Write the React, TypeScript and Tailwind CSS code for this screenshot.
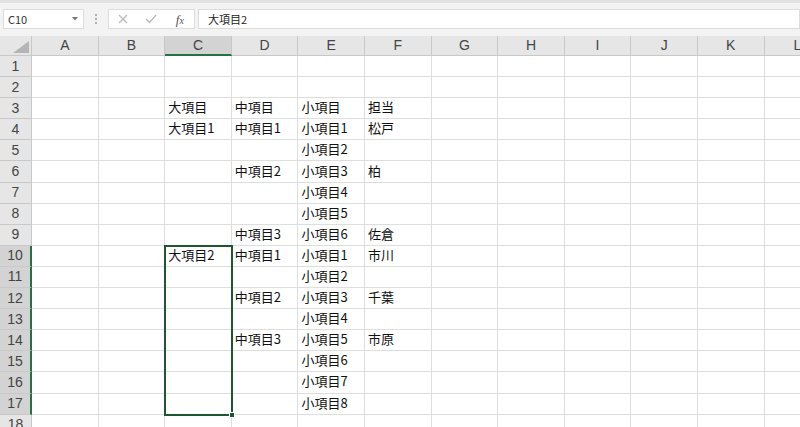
import React from "react";

const cols = ["A", "B", "C", "D", "E", "F", "G", "H", "I", "J", "K", "L"];

const data: Record<number, Record<string, string>> = {
  3: { C: "大項目", D: "中項目", E: "小項目", F: "担当" },
  4: { C: "大項目1", D: "中項目1", E: "小項目1", F: "松戸" },
  5: { E: "小項目2" },
  6: { D: "中項目2", E: "小項目3", F: "柏" },
  7: { E: "小項目4" },
  8: { E: "小項目5" },
  9: { D: "中項目3", E: "小項目6", F: "佐倉" },
  10: { C: "大項目2", D: "中項目1", E: "小項目1", F: "市川" },
  11: { E: "小項目2" },
  12: { D: "中項目2", E: "小項目3", F: "千葉" },
  13: { E: "小項目4" },
  14: { D: "中項目3", E: "小項目5", F: "市原" },
  15: { E: "小項目6" },
  16: { E: "小項目7" },
  17: { E: "小項目8" },
};

const rows = Array.from({ length: 18 }, (_, i) => i + 1);

export default function App() {
  return (
    <div className="w-[800px] h-[427px] overflow-hidden bg-white relative font-['Noto_Sans_CJK_JP','Noto_Sans',sans-serif]">
      {/* Formula bar area */}
      <div className="h-[36px] bg-[#f3f3f3] border-t-[3px] border-[#e2e2e2] flex items-start pt-[6px] pl-[3px]">
        <div className="w-[81px] h-[20px] bg-white border border-[#dcdcdc] flex items-center justify-between pl-[4px] pr-[4px]">
          <span className="text-[11px] text-[#333] leading-none">C10</span>
          <svg width="6" height="4" viewBox="0 0 6 4" className="mr-[1px]">
            <path d="M0 0 L6 0 L3 3.5 Z" fill="#777" />
          </svg>
        </div>
        <div className="w-[24px] h-[20px] flex flex-col items-center justify-center gap-[2px]">
          <span className="w-[2px] h-[2px] bg-[#b0b0b0]" />
          <span className="w-[2px] h-[2px] bg-[#b0b0b0]" />
          <span className="w-[2px] h-[2px] bg-[#b0b0b0]" />
        </div>
        <div className="w-[87px] h-[20px] bg-white border border-[#dcdcdc] flex items-center">
          <div className="w-[29px] flex justify-center">
            <svg width="10" height="10" viewBox="0 0 10 10">
              <path d="M1 1 L9 9 M9 1 L1 9" stroke="#b8b8b8" strokeWidth="1.2" />
            </svg>
          </div>
          <div className="w-[29px] flex justify-center">
            <svg width="12" height="10" viewBox="0 0 12 10">
              <path d="M1 5 L4.5 8.5 L11 1" stroke="#b8b8b8" strokeWidth="1.3" fill="none" />
            </svg>
          </div>
          <div className="w-[29px] flex justify-center">
            <span className="font-['Liberation_Serif',serif] italic text-[13px] text-[#555] leading-none">
              f<span className="text-[10px]">x</span>
            </span>
          </div>
        </div>
        <div className="ml-[3px] flex-1 h-[20px] bg-white border border-[#dcdcdc] flex items-center pl-[9px]">
          <span className="text-[11px] text-[#222] leading-none">大項目2</span>
        </div>
      </div>

      {/* Sheet */}
      <div className="relative">
        <div className="grid grid-cols-[32px_repeat(12,66.6px)] grid-rows-[20px_repeat(18,21.1px)]">
          {/* corner */}
          <div className="bg-[#e6e6e6] border-r border-b border-[#c8c8c8] relative">
            <svg width="16" height="12" viewBox="0 0 16 12" className="absolute right-[2px] bottom-[2px]">
              <path d="M16 0 L16 12 L0 12 Z" fill="#b5b5b5" />
            </svg>
          </div>
          {cols.map((c) =>
            c === "C" ? (
              <div
                key={c}
                className="bg-[#d3d3d3] border-r border-[#c8c8c8] border-b-2 border-b-[#217346] flex items-center justify-center text-[14px] text-[#444] font-['Liberation_Sans',sans-serif]"
              >
                {c}
              </div>
            ) : (
              <div
                key={c}
                className="bg-[#e6e6e6] border-r border-b border-[#c8c8c8] flex items-center justify-center text-[14px] text-[#444] font-['Liberation_Sans',sans-serif]"
              >
                {c}
              </div>
            )
          )}
          {rows.map((r) => {
            const sel = r >= 10 && r <= 17;
            return (
              <React.Fragment key={r}>
                {sel ? (
                  <div className="bg-[#d3d3d3] border-r-2 border-r-[#217346] border-b border-b-[#c8c8c8] flex items-center justify-center text-[14px] text-[#444] font-['Liberation_Sans',sans-serif]">
                    {r}
                  </div>
                ) : (
                  <div className="bg-[#e6e6e6] border-r border-b border-[#c8c8c8] flex items-center justify-center text-[14px] text-[#444] font-['Liberation_Sans',sans-serif]">
                    {r}
                  </div>
                )}
                {cols.map((c) => (
                  <div
                    key={c}
                    className="border-r border-b border-[#dedede] flex items-center pl-[3px] pb-[3px] text-[13px] text-[#111] leading-none whitespace-nowrap overflow-hidden"
                  >
                    {data[r]?.[c] ?? ""}
                  </div>
                ))}
              </React.Fragment>
            );
          })}
        </div>
        {/* Selection overlay */}
        <div className="absolute left-[164px] top-[209px] w-[69px] h-[171px] border-2 border-[#1f5532] pointer-events-none">
          <div className="absolute -right-[4px] -bottom-[4px] w-[6px] h-[6px] bg-[#1f5532] border border-white" />
        </div>
      </div>
    </div>
  );
}
